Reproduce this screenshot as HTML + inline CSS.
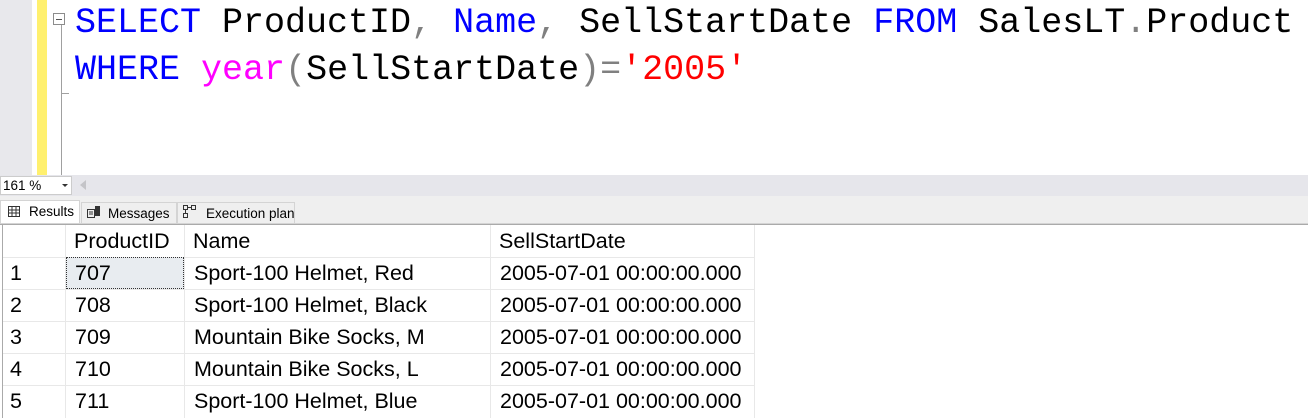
<!DOCTYPE html>
<html><head><meta charset="utf-8"><style>
*{margin:0;padding:0;box-sizing:border-box}
body{width:1308px;height:418px;overflow:hidden;background:#fff;position:relative;font-family:"Liberation Sans",Arial,sans-serif}
.abs{position:absolute}
.code{font-family:"Liberation Mono",monospace;font-size:35px;white-space:pre;left:75px;line-height:47px}
.kw{color:#0000ff}.fn{color:#ff00ff}.gr{color:#808080}.st{color:#ff0000}
.cell{position:absolute;font-size:21.5px;color:#000;white-space:nowrap}
.vl{position:absolute;width:1px;background:#e8e8e8}
.hl{position:absolute;height:1px;background:#e8e8e8}
.tab{position:absolute;top:202px;height:21px;font-size:13.5px;line-height:22px;color:#000;border:1px solid #d4d4d4;border-bottom:none;background:#efefef;white-space:nowrap}
</style></head><body>
<div class="abs" style="left:0;top:0;width:32px;height:175px;background:#e8e8ec"></div>
<div class="abs" style="left:37px;top:0;width:10px;height:175px;background:#fff06e"></div>
<div class="abs" style="left:53px;top:13px;width:12px;height:12px;border:1px solid #8c8c8c;background:#fff"></div>
<div class="abs" style="left:56px;top:19px;width:6px;height:1px;background:#555"></div>
<div class="abs" style="left:61px;top:25px;width:1px;height:150px;background:#a0a0a0"></div>
<div class="abs" style="left:61px;top:93px;width:8px;height:1px;background:#a0a0a0"></div>
<div class="abs code" style="top:0px"><span class="kw">SELECT</span> ProductID<span class="gr">,</span> <span class="kw">Name</span><span class="gr">,</span> SellStartDate <span class="kw">FROM</span> SalesLT<span class="gr">.</span>Product</div>
<div class="abs code" style="top:47px"><span class="kw">WHERE</span> <span class="fn">year</span><span class="gr">(</span>SellStartDate<span class="gr">)=</span><span class="st">'2005'</span></div>
<div class="abs" style="left:0;top:175px;width:1308px;height:21px;background:#e6e6eb"></div>
<div class="abs" style="left:0;top:176px;width:72px;height:19px;background:#fff;border:1px solid #ccc;font-size:13.5px;line-height:17px;padding-left:2px">161 %</div>
<div class="abs" style="left:62px;top:184px;width:0;height:0;border-left:3px solid transparent;border-right:3px solid transparent;border-top:3px solid #333"></div>
<div class="abs" style="left:80px;top:180px;width:0;height:0;border-top:5px solid transparent;border-bottom:5px solid transparent;border-right:6px solid #c4c4c8"></div>
<div class="abs" style="left:0;top:196px;width:1308px;height:27px;background:#efefef"></div>
<div class="tab" style="left:0;top:200px;width:80px;height:24px;background:#fff;padding-left:28px">Results</div>
<svg class="abs" style="left:8px;top:206px" width="12" height="11"><rect x="0.5" y="0.5" width="11" height="10" fill="none" stroke="#333"/><path d="M0 4h12M0 7h12M4 0v11M8 0v11" stroke="#333"/></svg>
<div class="tab" style="left:81px;width:96px;padding-left:26px">Messages</div>
<svg class="abs" style="left:87px;top:206px" width="14" height="12"><rect x="0.5" y="3.5" width="7" height="8" fill="none" stroke="#333"/><rect x="8" y="0" width="5" height="10" fill="#333"/><path d="M2 6h4M2 8h4" stroke="#333"/></svg>
<div class="tab" style="left:177px;width:118px;padding-left:28px">Execution plan</div>
<svg class="abs" style="left:183px;top:205px" width="14" height="13"><rect x="0.5" y="0.5" width="4" height="4" fill="none" stroke="#333"/><rect x="8.5" y="0.5" width="4" height="4" fill="none" stroke="#333"/><rect x="0.5" y="8.5" width="4" height="4" fill="none" stroke="#333"/><path d="M5 2.5h3M2.5 5v3" stroke="#333"/></svg>
<div class="abs" style="left:0;top:223px;width:1308px;height:1px;background:#d4d4d4"></div>
<div class="abs" style="left:0;top:224px;width:1308px;height:1px;background:#aaa"></div>
<div class="abs" style="left:2px;top:225px;width:1px;height:193px;background:#aaa"></div>
<div class="vl" style="left:65px;top:225px;height:193px"></div>
<div class="vl" style="left:184px;top:225px;height:193px"></div>
<div class="vl" style="left:490px;top:225px;height:193px"></div>
<div class="vl" style="left:754px;top:225px;height:193px"></div>
<div class="hl" style="left:3px;top:257px;width:751px"></div>
<div class="hl" style="left:3px;top:289px;width:751px"></div>
<div class="hl" style="left:3px;top:321px;width:751px"></div>
<div class="hl" style="left:3px;top:353px;width:751px"></div>
<div class="hl" style="left:3px;top:385px;width:751px"></div>
<div class="abs" style="left:66px;top:257px;width:118px;height:32px;background:#e8ecf0;border:1px dotted #333"></div>
<div class="cell" style="left:74px;top:229px">ProductID</div><div class="cell" style="left:193px;top:229px">Name</div><div class="cell" style="left:499px;top:229px">SellStartDate</div>
<div class="cell" style="left:10px;top:261px">1</div><div class="cell" style="left:75px;top:261px">707</div><div class="cell" style="left:194px;top:261px">Sport-100 Helmet, Red</div><div class="cell" style="left:500px;top:261px">2005-07-01 00:00:00.000</div>
<div class="cell" style="left:10px;top:293px">2</div><div class="cell" style="left:75px;top:293px">708</div><div class="cell" style="left:194px;top:293px">Sport-100 Helmet, Black</div><div class="cell" style="left:500px;top:293px">2005-07-01 00:00:00.000</div>
<div class="cell" style="left:10px;top:325px">3</div><div class="cell" style="left:75px;top:325px">709</div><div class="cell" style="left:194px;top:325px">Mountain Bike Socks, M</div><div class="cell" style="left:500px;top:325px">2005-07-01 00:00:00.000</div>
<div class="cell" style="left:10px;top:357px">4</div><div class="cell" style="left:75px;top:357px">710</div><div class="cell" style="left:194px;top:357px">Mountain Bike Socks, L</div><div class="cell" style="left:500px;top:357px">2005-07-01 00:00:00.000</div>
<div class="cell" style="left:10px;top:389px">5</div><div class="cell" style="left:75px;top:389px">711</div><div class="cell" style="left:194px;top:389px">Sport-100 Helmet, Blue</div><div class="cell" style="left:500px;top:389px">2005-07-01 00:00:00.000</div>
</body></html>
